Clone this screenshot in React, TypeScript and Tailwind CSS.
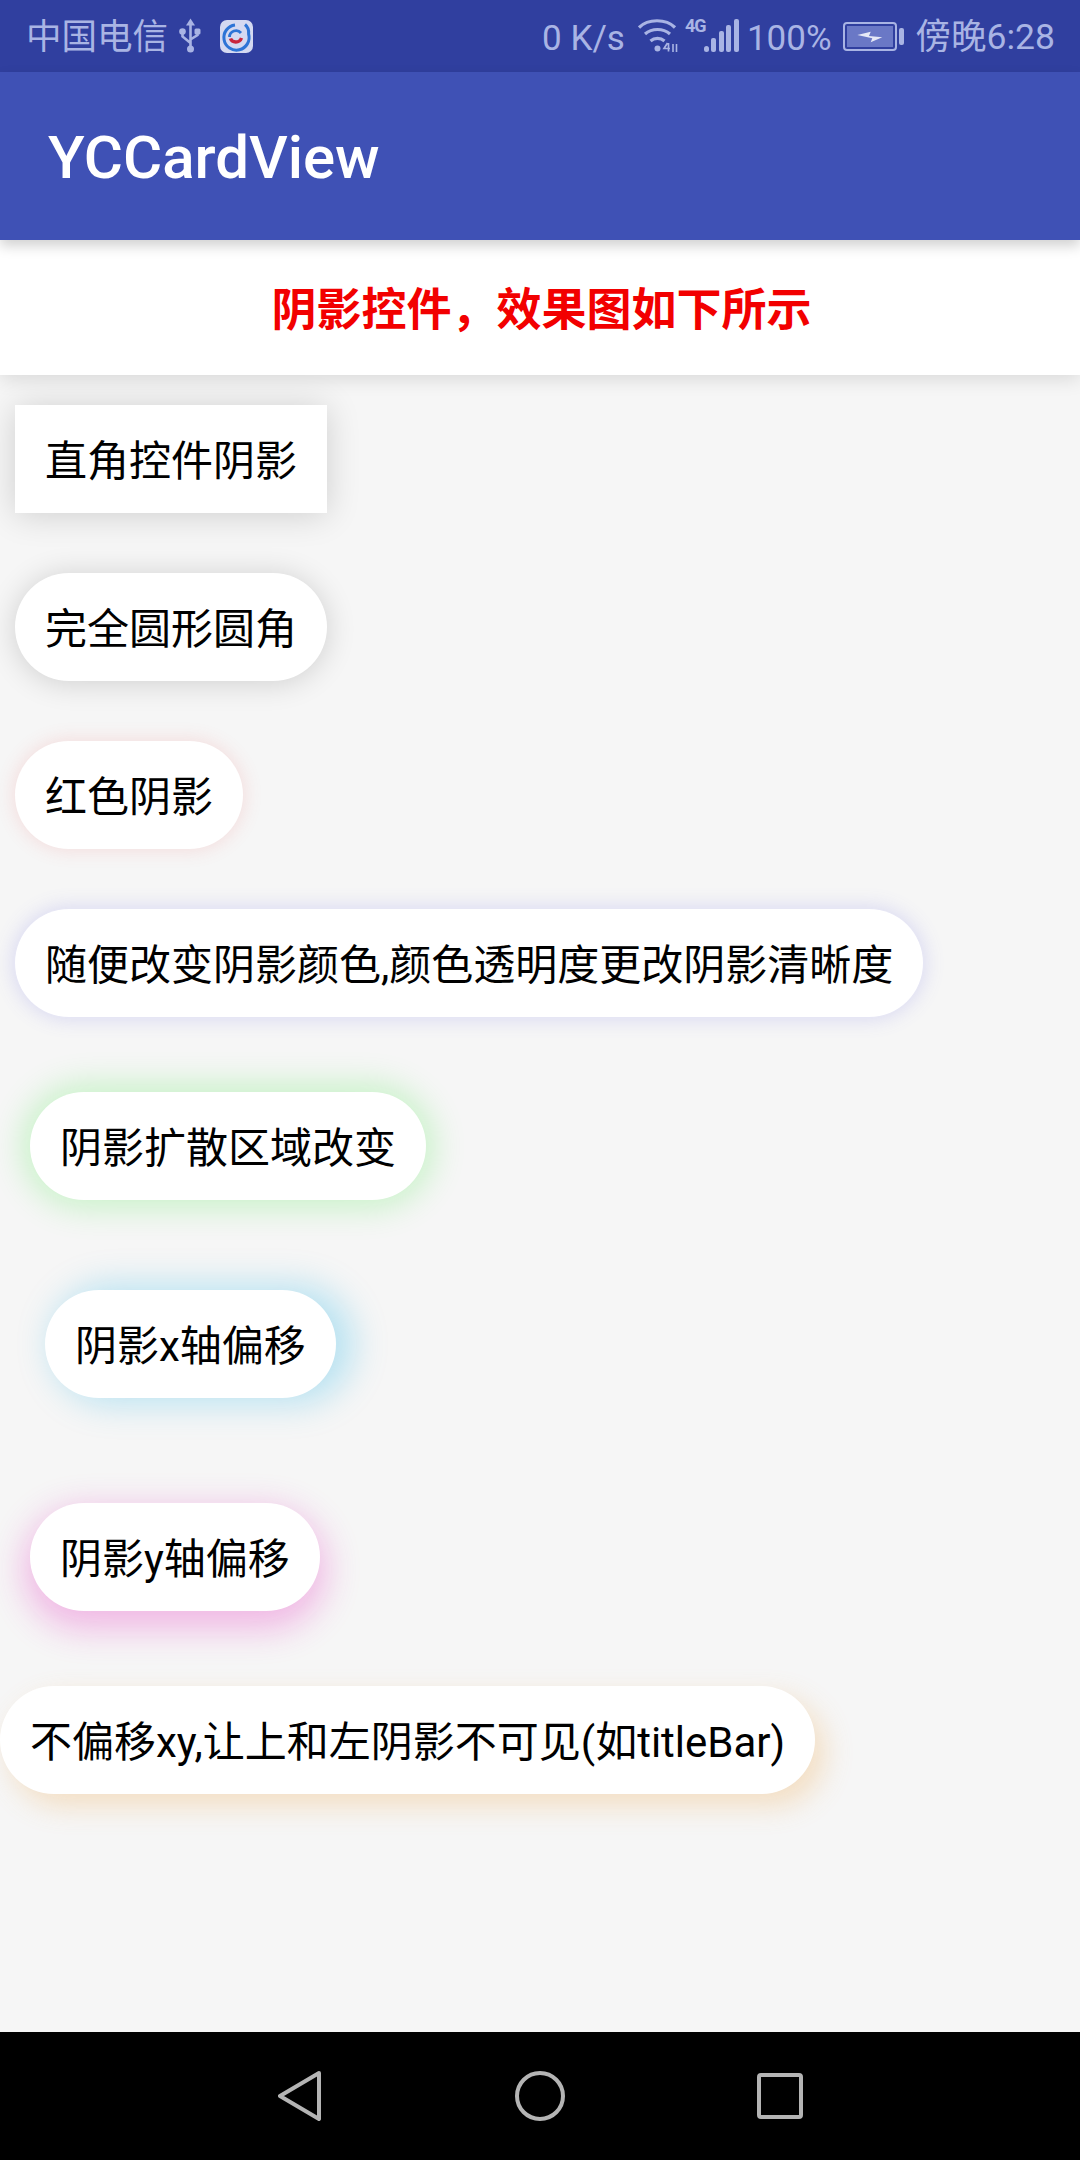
function StatusBar() {
  return (
    <div className="h-[72px] bg-[#303f9f] flex items-center text-[#a9b4e4] font-['Roboto','Noto_Sans_CJK_SC',sans-serif] text-[35px] leading-none">
      <span className="ml-[26px] pt-[4px] text-[35.5px]">中国电信</span>
      <svg className="ml-[11px]" width="24" height="36" viewBox="0 0 24 36" fill="none" stroke="#a9b4e4" strokeWidth="2.6">
        <path d="M11.5 4v26M11.5 25l-8-6.5v-4M11.5 21.5l7-4.5v-3" />
        <path d="M11.5 0.5l-4.5 7h9z" fill="#a9b4e4" stroke="none" />
        <circle cx="3.5" cy="13.5" r="3.3" fill="#a9b4e4" stroke="none" />
        <rect x="15.5" y="10.5" width="6" height="6" rx="1.5" fill="#a9b4e4" stroke="none" />
        <circle cx="11.5" cy="31" r="3.5" fill="#a9b4e4" stroke="none" />
      </svg>
      <svg className="ml-[17px]" width="33" height="33" viewBox="0 0 33 33" fill="none">
        <rect width="33" height="33" rx="7" fill="#d4d9f1" />
        <path d="M25 4.5c3 2.5 4 6 3.6 9.5A12.6 12.6 0 1 1 15 5" stroke="#2d74d6" strokeWidth="3" />
        <path d="M9.5 17a6.5 6.5 0 0 1 11.5-4" stroke="#2d74d6" strokeWidth="2.8" />
        <path d="M10.5 18.5c1.5 4.5 9 5 11-0.5" stroke="#c9253c" strokeWidth="3.4" />
      </svg>
      <div className="ml-auto flex items-center">
        <span className="pt-[4px]">0 K/s</span>
        <svg className="ml-[13px]" width="41" height="34" viewBox="0 0 41 34" fill="none" stroke="#a9b4e4" strokeWidth="3.2">
          <path d="M1 8.5C10-0.5 28-0.5 37 8.5M7 15c7-6 18-6 25 0M12.5 22c4-3.5 10-3.5 14 0" />
          <circle cx="19.5" cy="29.5" r="3" fill="#a9b4e4" stroke="none" />
          <path d="M29.5 24l-3.5 5.5h6M30.5 24v8.5" strokeWidth="1.7" />
          <path d="M35 25v8M38.5 25v8" strokeWidth="1.6" />
        </svg>
        <div className="relative w-[55px] h-[34px] ml-[6px]">
          <span className="absolute left-0 top-[-2px] text-[18px] font-bold leading-none tracking-[-1px]">4G</span>
          <svg className="absolute left-[19px] top-0" width="36" height="34" viewBox="0 0 36 34" fill="#a9b4e4">
            <rect x="0" y="27" width="5" height="6" rx="2.5" />
            <rect x="7" y="19" width="5" height="14" rx="2" />
            <rect x="15" y="12" width="5" height="21" rx="2" />
            <rect x="22" y="6" width="5" height="27" rx="2" />
            <rect x="30" y="0" width="5" height="33" rx="2" />
          </svg>
        </div>
        <span className="ml-[7px] mr-[11px] pt-[4px]">100%</span>
        <svg width="62" height="31" viewBox="0 0 62 31" fill="none">
          <rect x="1" y="2" width="52" height="27" rx="3" stroke="#a9b4e4" strokeWidth="2" />
          <rect x="4" y="5" width="46" height="21" fill="#6a78c6" />
          <path d="M14.3 14l13.4-3.3-1.7 4.3 13.3 1.3-11.6 5 1.6-4z" fill="#e6e9f7" />
          <rect x="56" y="7" width="5" height="17" rx="2" fill="#a9b4e4" />
        </svg>
        <span className="ml-[11px] mr-[25px] pt-[4px] text-[35.5px]">傍晚6:28</span>
      </div>
    </div>
  );
}

function AppBar() {
  return (
    <div className="relative z-20 h-[168px] bg-[#3f51b5] flex items-center pl-[48px] pt-[4px] shadow-[0_6px_12px_rgba(0,0,0,0.18)]">
      <h1 className="font-['Roboto',sans-serif] font-medium text-[60px] leading-none text-white">YCCardView</h1>
    </div>
  );
}

function NavBar() {
  return (
    <div className="h-[128px] bg-black flex items-center pl-[278px]">
      <div className="w-[525px] flex items-center justify-between">
        <svg width="44" height="50" viewBox="0 0 44 50" fill="none" stroke="#b4b4b4" strokeWidth="4" strokeLinejoin="round">
          <path d="M41 2L2 25l39 23z" />
        </svg>
        <svg width="50" height="50" viewBox="0 0 50 50" fill="none" stroke="#b4b4b4" strokeWidth="4">
          <circle cx="25" cy="25" r="23" />
        </svg>
        <svg width="46" height="46" viewBox="0 0 46 46" fill="none" stroke="#b4b4b4" strokeWidth="4" strokeLinejoin="round">
          <rect x="2" y="2" width="42" height="42" rx="2" />
        </svg>
      </div>
    </div>
  );
}

const card = "bg-white h-[108px] px-[30px] pt-[6px] flex items-center text-[42px] leading-none text-black whitespace-nowrap";

export default function App() {
  return (
    <div className="w-[1080px] h-[2160px] flex flex-col bg-[#f6f6f6] font-['Roboto','Noto_Sans_CJK_SC',sans-serif]">
      <StatusBar />
      <AppBar />
      <div className="relative z-10 h-[135px] bg-white flex items-center justify-center pl-[3px] pt-[5px] shadow-[0_4px_18px_rgba(0,0,0,0.12)]">
        <span className="text-[45px] font-bold text-[#f20000] leading-none">阴影控件，效果图如下所示</span>
      </div>
      <main className="flex-1 flex flex-col items-start">
        <div className={`${card} ml-[15px] mt-[30px] shadow-[0_2px_32px_rgba(0,0,0,0.16)]`}>直角控件阴影</div>
        <div className={`${card} ml-[15px] mt-[60px] rounded-[54px] shadow-[0_2px_30px_rgba(0,0,0,0.16)]`}>完全圆形圆角</div>
        <div className={`${card} ml-[15px] mt-[60px] rounded-[54px] shadow-[0_0_18px_2px_rgba(240,90,90,0.15)]`}>红色阴影</div>
        <div className={`${card} ml-[15px] mt-[60px] rounded-[54px] shadow-[0_0_20px_2px_rgba(100,100,230,0.2)]`}>随便改变阴影颜色,颜色透明度更改阴影清晰度</div>
        <div className={`${card} ml-[30px] mt-[75px] rounded-[54px] shadow-[0_0_34px_7px_rgba(0,230,0,0.2)]`}>阴影扩散区域改变</div>
        <div className={`${card} ml-[45px] mt-[90px] rounded-[54px] shadow-[12px_0_34px_6px_rgba(0,170,230,0.25)]`}>阴影x轴偏移</div>
        <div className={`${card} ml-[30px] mt-[105px] rounded-[54px] shadow-[0_12px_34px_6px_rgba(230,40,190,0.3)]`}>阴影y轴偏移</div>
        <div className={`${card} mt-[75px] rounded-[54px] shadow-[10px_12px_28px_rgba(240,170,80,0.3)]`}>不偏移xy,让上和左阴影不可见(如titleBar)</div>
      </main>
      <NavBar />
    </div>
  );
}
